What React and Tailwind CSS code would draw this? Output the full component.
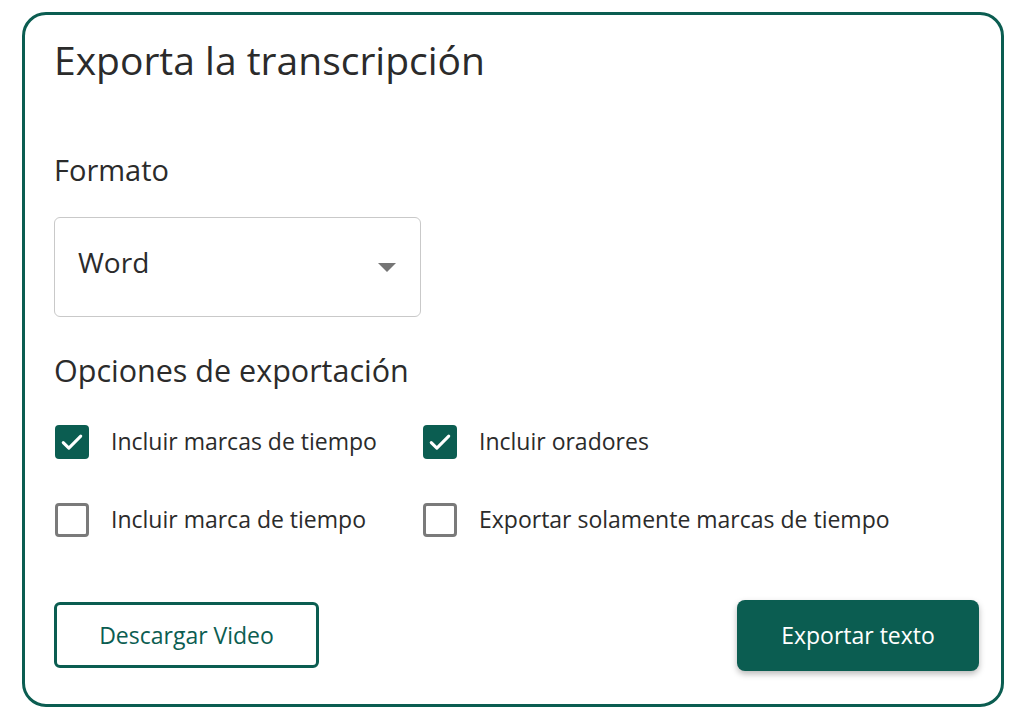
import React, { useState } from "react";

function Check({ checked, label, onToggle }) {
  return (
    <button
      type="button"
      onClick={onToggle}
      className="flex items-center gap-[22px] text-left"
    >
      <span
        className={`flex h-[34px] w-[34px] shrink-0 items-center justify-center rounded-[4px] ${
          checked
            ? "bg-[#0b5d51]"
            : "border-[3px] border-[#7a7a7a] bg-white"
        }`}
      >
        {checked && (
          <svg width="28" height="28" viewBox="0 0 24 24" fill="none">
            <path
              d="M4.5 12.5l4.8 4.8L19.5 7"
              stroke="white"
              strokeWidth="2.6"
              strokeLinecap="round"
              strokeLinejoin="round"
            />
          </svg>
        )}
      </span>
      <span className="text-[23px] leading-[23px] text-[#2b2b2b]">{label}</span>
    </button>
  );
}

export default function App() {
  const [opts, setOpts] = useState({
    marcas: true,
    oradores: true,
    marca: false,
    solo: false,
  });
  const toggle = (k) => setOpts((o) => ({ ...o, [k]: !o[k] }));

  return (
    <div
      className="min-h-screen bg-white pt-[12px] pl-[22px]"
      style={{ fontFamily: '"Open Sans", "Liberation Sans", sans-serif' }}
    >
      <div className="flex h-[695px] w-[982px] flex-col rounded-[24px] border-[3px] border-[#0b5d51] pl-[29px] pt-[25px] pr-[22px]">
        {/* Title */}
        <h1 className="text-[39px] leading-[39px] text-[#2b2b2b]">
          Exporta la transcripción
        </h1>

        {/* Format */}
        <h2 className="mt-[76px] text-[29px] leading-[29px] text-[#2b2b2b]">
          Formato
        </h2>
        <div className="mt-[33px] flex h-[100px] w-[367px] items-start justify-between rounded-[6px] border-[1.5px] border-[#c9c9c9] pl-[23px] pr-[24px] pt-[30px]">
          <span className="text-[28px] leading-[28px] text-[#2b2b2b]">Word</span>
          <svg className="mt-[15px]" width="18" height="9" viewBox="0 0 18 9">
            <path d="M0 0h18L9 9z" fill="#757575" />
          </svg>
        </div>

        {/* Options */}
        <h2 className="mt-[38px] text-[30.5px] leading-[30.5px] text-[#2b2b2b]">
          Opciones de exportación
        </h2>
        <div className="mt-[39px] grid grid-cols-[368px_1fr] gap-y-[44px] pl-[1px]">
          <Check
            checked={opts.marcas}
            label="Incluir marcas de tiempo"
            onToggle={() => toggle("marcas")}
          />
          <Check
            checked={opts.oradores}
            label="Incluir oradores"
            onToggle={() => toggle("oradores")}
          />
          <Check
            checked={opts.marca}
            label="Incluir marca de tiempo"
            onToggle={() => toggle("marca")}
          />
          <Check
            checked={opts.solo}
            label="Exportar solamente marcas de tiempo"
            onToggle={() => toggle("solo")}
          />
        </div>

        {/* Actions */}
        <div className="mt-[63px] flex items-center justify-between">
          <button className="flex h-[66px] w-[265px] items-center justify-center rounded-[6px] border-[3px] border-[#0b5d51] text-[23px] font-medium text-[#0b5d51]">
            Descargar Video
          </button>
          <button className="flex h-[71px] w-[242px] items-center justify-center rounded-[8px] bg-[#0b5d51] text-[23px] font-medium text-white shadow-[0_3px_6px_rgba(0,0,0,0.28)]">
            Exportar texto
          </button>
        </div>
      </div>
    </div>
  );
}
